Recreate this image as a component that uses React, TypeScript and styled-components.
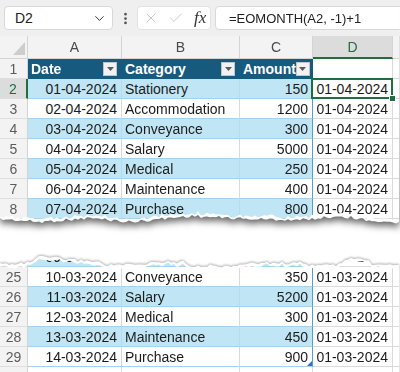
import React from 'react';
import styled, { createGlobalStyle } from 'styled-components';
import { ChevronDown, EllipsisVertical, X, Check } from 'lucide-react';

const COLS = '28px 94px 118px 73px 80px 1fr';
const GRID = '#dadada';
const GREEN = '#1e6e42';
const TABLE_HEAD = '#175a80';
const BAND = '#c0e6f5';

type Entry = { n: number; date: string; cat: string; amt: number; d: string };

const topRows: Entry[] = [
  { n: 2, date: '01-04-2024', cat: 'Stationery', amt: 150, d: '01-04-2024' },
  { n: 3, date: '02-04-2024', cat: 'Accommodation', amt: 1200, d: '01-04-2024' },
  { n: 4, date: '03-04-2024', cat: 'Conveyance', amt: 300, d: '01-04-2024' },
  { n: 5, date: '04-04-2024', cat: 'Salary', amt: 5000, d: '01-04-2024' },
  { n: 6, date: '05-04-2024', cat: 'Medical', amt: 250, d: '01-04-2024' },
  { n: 7, date: '06-04-2024', cat: 'Maintenance', amt: 400, d: '01-04-2024' },
  { n: 8, date: '07-04-2024', cat: 'Purchase', amt: 800, d: '01-04-2024' },
  { n: 9, date: '08-04-2024', cat: 'Stationery', amt: 180, d: '01-04-2024' },
];

const bottomRows: Entry[] = [
  { n: 24, date: '09-03-2024', cat: 'Accommodation', amt: 1500, d: '01-03-2024' },
  { n: 25, date: '10-03-2024', cat: 'Conveyance', amt: 350, d: '01-03-2024' },
  { n: 26, date: '11-03-2024', cat: 'Salary', amt: 5200, d: '01-03-2024' },
  { n: 27, date: '12-03-2024', cat: 'Medical', amt: 300, d: '01-03-2024' },
  { n: 28, date: '13-03-2024', cat: 'Maintenance', amt: 450, d: '01-03-2024' },
  { n: 29, date: '14-03-2024', cat: 'Purchase', amt: 900, d: '01-03-2024' },
];

// --- torn paper edges (deterministic noise) ---
const rnd = (i: number, seed: number) => {
  const v = Math.sin(i * 12.9898 + seed * 78.233) * 43758.5453;
  return v - Math.floor(v);
};

const lerp = (keys: number[][], x: number) => {
  for (let i = 0; i < keys.length - 1; i++) {
    const [x0, y0] = keys[i];
    const [x1, y1] = keys[i + 1];
    if (x >= x0 && x <= x1) return y0 + ((y1 - y0) * (x - x0)) / (x1 - x0 || 1);
  }
  return keys[keys.length - 1][1];
};

const edge = (keys: number[][], seed: number) => {
  const pts: number[][] = [];
  for (let x = 0, i = 0; x <= 400; x += 3, i++) {
    pts.push([x, lerp(keys, x) + (rnd(i, seed) - 0.5) * 3]);
  }
  return pts;
};

const topKeys = [[0, 219], [40, 222], [90, 218], [130, 222], [190, 216], [250, 219], [300, 220], [340, 216], [390, 223], [400, 222]];
const bottomKeys = [[0, 17], [30, 16], [37, 10], [55, 11], [70, 13], [95, 14], [105, 18], [145, 18], [152, 15], [185, 15], [192, 19], [240, 19], [247, 16], [300, 16], [306, 18], [340, 18], [346, 12], [365, 12], [372, 17], [400, 17]];

const topOuter = edge(topKeys, 1);
const topInner = topOuter.map(([x, y], i) => [x, y - 1.5 - rnd(i, 7) * 2.5]);
const bottomOuter = edge(bottomKeys, 3);
const bottomInner = bottomOuter.map(([x, y], i) => [x, y + 1.5 + rnd(i, 11) * 2.5]);

const pts = (list: number[][]) => list.map(([x, y]) => `${x}px ${y.toFixed(1)}px`).join(', ');
const topClip = (list: number[][]) => `polygon(0px 0px, 400px 0px, ${pts([...list].reverse())})`;
const bottomClip = (list: number[][]) => `polygon(${pts(list)}, 400px 100%, 0px 100%)`;

const GlobalStyle = createGlobalStyle`
  body {
    margin: 0;
    background: #ffffff;
    overflow: hidden;
    font-family: "Liberation Sans", Arial, sans-serif;
  }
`;

const Page = styled.div`
  width: 400px;
  height: 372px;
  overflow: hidden;
  background: #ffffff;
`;

const TornTop = styled.div`
  filter: drop-shadow(0 4px 3.5px rgba(0, 0, 0, 0.6));
`;

const TornBottom = styled.div`
  margin-top: 8px;
  filter: drop-shadow(0 -1px 1px rgba(0, 0, 0, 0.3));
`;

const Paper = styled.div<{ $clip: string }>`
  background: #ffffff;
  clip-path: ${(p) => p.$clip};
`;

const PaperContent = styled.div<{ $clip: string }>`
  clip-path: ${(p) => p.$clip};
`;

const Toolbar = styled.div`
  display: flex;
  align-items: center;
  height: 36px;
  padding-left: 4px;
  background: #efefef;
  overflow: hidden;
`;

const NameBox = styled.div`
  box-sizing: border-box;
  width: 109px;
  height: 24px;
  display: flex;
  align-items: center;
  justify-content: space-between;
  padding: 0 5px 0 10px;
  background: #ffffff;
  border: 1px solid #d8d8d8;
  border-radius: 4px;
  font-size: 14px;
  color: #222;
`;

const Dots = styled.div`
  width: 24px;
  display: flex;
  justify-content: center;
  color: #555;
`;

const FxBox = styled.div`
  box-sizing: border-box;
  width: 74px;
  height: 24px;
  display: flex;
  align-items: center;
  gap: 9px;
  padding-left: 5px;
  background: #ffffff;
  border: 1px solid #e2e2e2;
  border-radius: 4px;
  color: #c2c2c2;
`;

const FxLabel = styled.span`
  font-family: "Liberation Serif", "Times New Roman", serif;
  font-style: italic;
  font-size: 17px;
  color: #333;
  margin-left: 1px;
`;

const FormulaBox = styled.div`
  box-sizing: border-box;
  flex: 1;
  height: 24px;
  margin-left: 4px;
  margin-right: -8px;
  display: flex;
  align-items: center;
  padding-left: 13px;
  background: #ffffff;
  border: 1px solid #d8d8d8;
  border-radius: 4px;
  font-size: 13px;
  color: #222;
`;

const HeaderRow = styled.div`
  display: grid;
  grid-template-columns: ${COLS};
  height: 23px;
  background: #f3f3f3;
`;

const Corner = styled.div`
  box-sizing: border-box;
  display: flex;
  align-items: flex-end;
  justify-content: flex-end;
  padding: 0 2px 3px 0;
  border-right: 1px solid #d4d4d4;
  border-bottom: 1px solid #d4d4d4;
`;

const ColHead = styled.div<{ $selected?: boolean }>`
  box-sizing: border-box;
  display: flex;
  align-items: center;
  justify-content: center;
  font-size: 14px;
  color: ${(p) => (p.$selected ? GREEN : '#4a4a4a')};
  background: ${(p) => (p.$selected ? '#dcdcdc' : 'transparent')};
  border-right: 1px solid #d4d4d4;
  border-bottom: ${(p) => (p.$selected ? `2px solid ${GREEN}` : '1px solid #d4d4d4')};
`;

const SheetRow = styled.div`
  display: grid;
  grid-template-columns: ${COLS};
  height: 20px;
  font-size: 14px;
  color: #1c1c1c;
`;

const RowHead = styled.div<{ $selected?: boolean }>`
  box-sizing: border-box;
  display: flex;
  align-items: center;
  justify-content: center;
  background: ${(p) => (p.$selected ? '#dcdcdc' : '#f3f3f3')};
  color: ${(p) => (p.$selected ? GREEN : '#5c5c5c')};
  border-right: ${(p) => (p.$selected ? `2px solid ${GREEN}` : '1px solid #d4d4d4')};
  border-bottom: 1px solid #dedede;
  font-size: 14px;
`;

type Tone = 'head' | 'band' | 'plain' | 'sheet';

const Cell = styled.div<{ $tone: Tone; $right?: boolean; $edge?: boolean }>`
  box-sizing: border-box;
  position: relative;
  display: flex;
  align-items: center;
  justify-content: ${(p) => (p.$tone === 'head' ? 'space-between' : p.$right ? 'flex-end' : 'flex-start')};
  padding: ${(p) => (p.$tone === 'head' ? '0 4px 0 3px' : p.$right ? '0 4px 0 3px' : '0 3px')};
  white-space: nowrap;
  overflow: visible;
  background: ${(p) => (p.$tone === 'head' ? TABLE_HEAD : p.$tone === 'band' ? BAND : '#ffffff')};
  color: ${(p) => (p.$tone === 'head' ? '#ffffff' : '#1c1c1c')};
  font-weight: ${(p) => (p.$tone === 'head' ? 700 : 400)};
  border-right: 1px solid
    ${(p) => (p.$edge && p.$tone !== 'head' ? '#4f9fd0' : p.$tone === 'head' ? TABLE_HEAD : p.$tone === 'band' ? '#b4dbee' : GRID)};
  border-bottom: 1px solid
    ${(p) => (p.$tone === 'head' ? TABLE_HEAD : p.$tone === 'sheet' ? GRID : '#a6d3ec')};
`;

const FilterButton = styled.span`
  box-sizing: border-box;
  width: 14px;
  height: 14px;
  flex-shrink: 0;
  display: flex;
  align-items: center;
  justify-content: center;
  background: #f2f2f2;
  border: 1px solid #c4c4c4;
`;

const ActiveFrame = styled.span`
  position: absolute;
  z-index: 2;
  top: -1px;
  left: -2px;
  right: -1px;
  bottom: -1px;
  border: 2px solid ${GREEN};
  pointer-events: none;

  &::after {
    content: '';
    position: absolute;
    right: -5px;
    bottom: -5px;
    width: 5px;
    height: 5px;
    background: ${GREEN};
    border: 1px solid #ffffff;
  }
`;

const ResizeMark = styled.span`
  position: absolute;
  z-index: 2;
  right: 0;
  bottom: 0;
  width: 0;
  height: 0;
  border-left: 5px solid transparent;
  border-bottom: 5px solid #2f6fc4;
`;

const Caret = () => (
  <svg width="7" height="4" viewBox="0 0 7 4">
    <polygon points="0,0 7,0 3.5,4" fill="#5a5a5a" />
  </svg>
);

const DataRow: React.FC<{ e: Entry; active?: boolean; last?: boolean }> = ({ e, active, last }) => {
  const tone: Tone = e.n % 2 === 0 ? 'band' : 'plain';
  return (
    <SheetRow>
      <RowHead $selected={active}>{e.n}</RowHead>
      <Cell $tone={tone} $right>{e.date}</Cell>
      <Cell $tone={tone}>{e.cat}</Cell>
      <Cell $tone={tone} $right $edge>
        {e.amt}
        {last && <ResizeMark />}
      </Cell>
      <Cell $tone="sheet" $right>
        {e.d}
        {active && <ActiveFrame />}
      </Cell>
      <Cell $tone="sheet" />
    </SheetRow>
  );
};

const App: React.FC = () => {
  return (
    <Page>
      <GlobalStyle />
      <TornTop>
        <Paper $clip={topClip(topOuter)}>
          <PaperContent $clip={topClip(topInner)}>
            <Toolbar>
              <NameBox>
                D2
                <ChevronDown size={15} strokeWidth={1.6} color="#333" />
              </NameBox>
              <Dots>
                <EllipsisVertical size={15} strokeWidth={2.4} />
              </Dots>
              <FxBox>
                <X size={16} strokeWidth={1.3} />
                <Check size={16} strokeWidth={1.3} />
                <FxLabel>fx</FxLabel>
              </FxBox>
              <FormulaBox>=EOMONTH(A2, -1)+1</FormulaBox>
            </Toolbar>

            <HeaderRow>
              <Corner>
                <svg width="12" height="13" viewBox="0 0 12 13">
                  <polygon points="12,0 12,13 0,13" fill="#cdcdcd" />
                </svg>
              </Corner>
              <ColHead>A</ColHead>
              <ColHead>B</ColHead>
              <ColHead>C</ColHead>
              <ColHead $selected>D</ColHead>
              <ColHead />
            </HeaderRow>

            <SheetRow>
              <RowHead>1</RowHead>
              <Cell $tone="head">
                Date
                <FilterButton><Caret /></FilterButton>
              </Cell>
              <Cell $tone="head">
                Category
                <FilterButton><Caret /></FilterButton>
              </Cell>
              <Cell $tone="head">
                Amount
                <FilterButton><Caret /></FilterButton>
              </Cell>
              <Cell $tone="sheet" />
              <Cell $tone="sheet" />
            </SheetRow>

            {topRows.map((e) => (
              <DataRow key={e.n} e={e} active={e.n === 2} />
            ))}
          </PaperContent>
        </Paper>
      </TornTop>

      <TornBottom>
        <Paper $clip={bottomClip(bottomOuter)}>
          <PaperContent $clip={bottomClip(bottomInner)}>
            {bottomRows.map((e) => (
              <DataRow key={e.n} e={e} last={e.n === 29} />
            ))}
            <SheetRow>
              <RowHead />
              <Cell $tone="sheet" />
              <Cell $tone="sheet" />
              <Cell $tone="sheet" />
              <Cell $tone="sheet" />
              <Cell $tone="sheet" />
            </SheetRow>
          </PaperContent>
        </Paper>
      </TornBottom>
    </Page>
  );
};

export default App;
